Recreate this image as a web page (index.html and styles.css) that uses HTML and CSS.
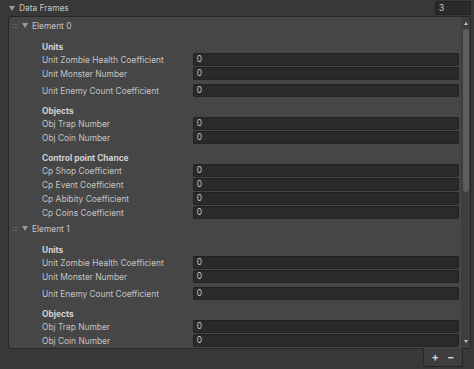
FILE: index.html
```html
<!DOCTYPE html>
<html lang="en">
<head>
  <meta charset="UTF-8">
  <title>Data Frames</title>
  <link rel="stylesheet" href="styles.css">
</head>
<body>
  <div class="top-row">
    <span class="arrow"></span>
    <span class="top-label">Data Frames</span>
    <div class="size-field">3</div>
  </div>

  <div class="list">
    <div class="list-content">

      <div class="element">
        <div class="element-head">
          <span class="handle"></span>
          <span class="arrow"></span>
          <span>Element 0</span>
        </div>
        <div class="group-title">Units</div>
        <div class="prop"><label>Unit Zombie Health Coefficient</label><div class="field">0</div></div>
        <div class="prop"><label>Unit Monster Number</label><div class="field">0</div></div>
        <div class="prop spaced"><label>Unit Enemy Count Coefficient</label><div class="field">0</div></div>
        <div class="group-title">Objects</div>
        <div class="prop"><label>Obj Trap Number</label><div class="field">0</div></div>
        <div class="prop"><label>Obj Coin Number</label><div class="field">0</div></div>
        <div class="group-title">Control point Chance</div>
        <div class="prop"><label>Cp Shop Coefficient</label><div class="field">0</div></div>
        <div class="prop"><label>Cp Event Coefficient</label><div class="field">0</div></div>
        <div class="prop"><label>Cp Abibity Coefficient</label><div class="field">0</div></div>
        <div class="prop"><label>Cp Coins Coefficient</label><div class="field">0</div></div>
      </div>

      <div class="element">
        <div class="element-head">
          <span class="handle"></span>
          <span class="arrow"></span>
          <span>Element 1</span>
        </div>
        <div class="group-title">Units</div>
        <div class="prop"><label>Unit Zombie Health Coefficient</label><div class="field">0</div></div>
        <div class="prop"><label>Unit Monster Number</label><div class="field">0</div></div>
        <div class="prop spaced"><label>Unit Enemy Count Coefficient</label><div class="field">0</div></div>
        <div class="group-title">Objects</div>
        <div class="prop"><label>Obj Trap Number</label><div class="field">0</div></div>
        <div class="prop"><label>Obj Coin Number</label><div class="field">0</div></div>
      </div>

    </div>
    <div class="scrollbar">
      <span class="scroll-up"></span>
      <div class="thumb"></div>
      <span class="scroll-down"></span>
    </div>
  </div>

  <div class="footer">
    <div class="footer-buttons">
      <span class="btn">+</span>
      <span class="btn">&minus;</span>
    </div>
  </div>
</body>
</html>
```

FILE: styles.css
```css
body {
  margin: 0;
  background-color: #383838;
  font-family: Inter, "Noto Sans", sans-serif;
  font-size: 8.4px;
  color: #c4c4c4;
  height: 369px;
  overflow: hidden;
}
.arrow {
  width: 0;
  height: 0;
  border-left: 3px solid transparent;
  border-right: 3px solid transparent;
  border-top: 5px solid #9a9a9a;
  margin-right: 4px;
}
.top-row {
  height: 16px;
  display: flex;
  align-items: center;
  padding-left: 9px;
}
.top-label {
  flex: 1;
}
.size-field {
  width: 31px;
  height: 12px;
  margin-right: 3px;
  background-color: #2a2a2a;
  border: 1px solid #222;
  border-radius: 2px;
  padding-left: 3px;
  line-height: 12px;
}
.list {
  margin-left: 8px;
  width: 461px;
  height: 331px;
  border: 1px solid #262626;
  border-radius: 3px;
  background-color: #464646;
  display: flex;
  overflow: hidden;
}
.list-content {
  flex: 1;
  overflow: hidden;
}
.element-head {
  height: 17px;
  display: flex;
  align-items: center;
  padding-left: 3px;
}
.handle {
  width: 6px;
  height: 2px;
  border-top: 1px solid #5c5c5c;
  border-bottom: 1px solid #5c5c5c;
  margin-right: 4px;
}
.group-title {
  margin-top: 7px;
  height: 12px;
  line-height: 12px;
  padding-left: 33px;
  font-weight: bold;
  color: #d2d2d2;
}
.prop {
  display: flex;
  align-items: center;
  height: 14px;
  padding-left: 33px;
}
.prop.spaced {
  margin-top: 3px;
}
.prop label {
  width: 151px;
}
.field {
  width: 262px;
  height: 11px;
  line-height: 11px;
  margin-bottom: 1px;
  background-color: #2a2a2a;
  border: 1px solid #212121;
  border-bottom-color: #242424;
  border-radius: 2px;
  padding-left: 3px;
}
.scrollbar {
  width: 9px;
  margin-left: 2px;
  background-color: #3e3e3e;
  display: flex;
  flex-direction: column;
  align-items: center;
  padding-top: 5px;
}
.scroll-up {
  width: 0;
  height: 0;
  border-left: 2px solid transparent;
  border-right: 2px solid transparent;
  border-bottom: 3px solid #c0c0c0;
}
.thumb {
  width: 6px;
  height: 163px;
  margin-top: 4px;
  background-color: #5d5d5d;
  border-radius: 3px;
}
.scroll-down {
  margin-top: auto;
  margin-bottom: 5px;
  width: 0;
  height: 0;
  border-left: 2px solid transparent;
  border-right: 2px solid transparent;
  border-top: 3px solid #c0c0c0;
}
.footer {
  display: flex;
  justify-content: flex-end;
  padding-right: 11px;
}
.footer-buttons {
  width: 38px;
  height: 18px;
  margin-top: -1px;
  background-color: #3e3e3e;
  border: 1px solid #262626;
  border-top: none;
  border-radius: 0 0 3px 3px;
  display: flex;
  align-items: center;
  justify-content: center;
  gap: 8px;
}
.btn {
  color: #d8d8d8;
  font-size: 11px;
  font-weight: bold;
}
```
